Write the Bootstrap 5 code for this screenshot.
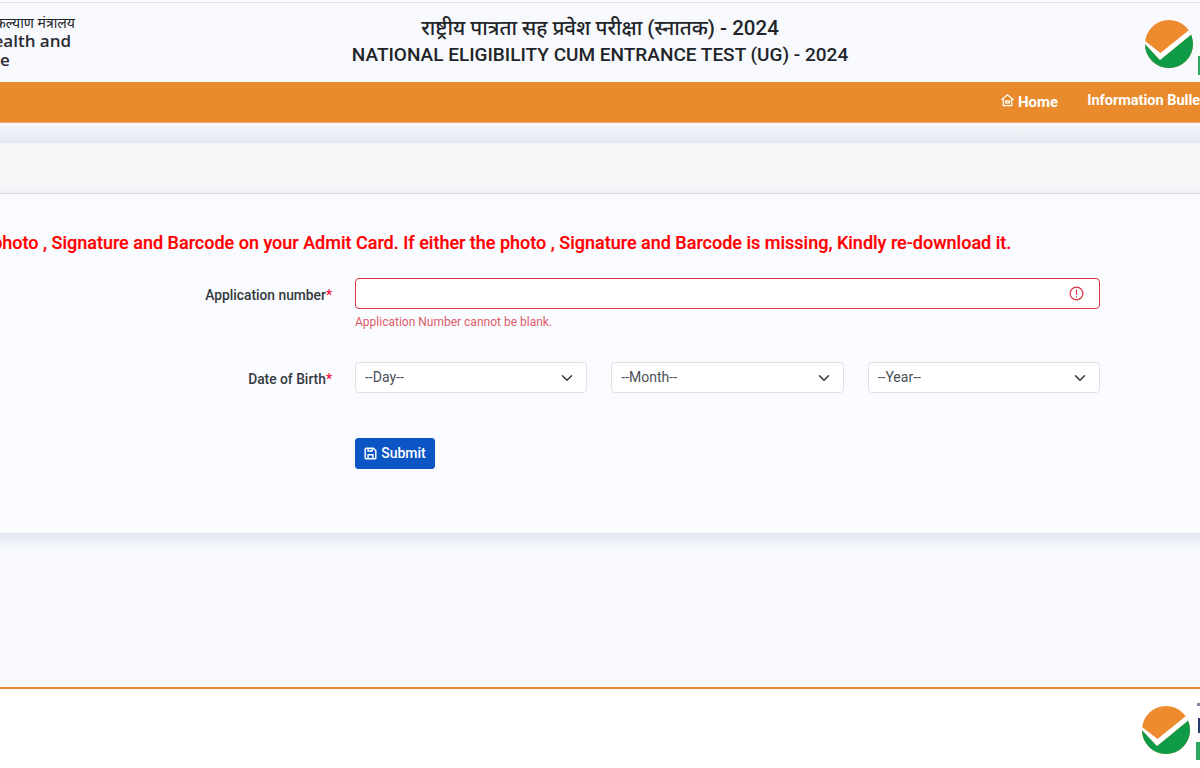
<!DOCTYPE html>
<html lang="en">
<head>
    <meta charset="UTF-8">
    <meta name="viewport" content="width=device-width, initial-scale=1.0">
    <link href="https://cdn.jsdelivr.net/npm/bootstrap@5.3.3/dist/css/bootstrap.min.css" rel="stylesheet">
    <title>NEET (UG) - 2024</title>
    <style>
        html, body {
            height: 768px;
            overflow: hidden;
        }
        body {
            background-color: #f8faff;
            font-family: Roboto, "Noto Sans", sans-serif;
            color: #212529;
        }
        .page-wrap {
            width: 1440px;
            margin-left: -120px;
        }
        .top-head {
            height: 80px;
            margin-top: 2px;
            background-color: #f8f9fc;
            border-top: 1px solid #dfe1e6;
            padding-left: 8px;
            padding-right: 113px;
        }
        .hindi-min {
            font-family: "Noto Sans", "Liberation Serif", serif;
            font-size: 14px;
            line-height: 16px;
            margin-left: 6px;
        }
        .eng-min {
            font-family: "Open Sans", sans-serif;
            font-size: 17px;
            font-weight: 600;
            line-height: 19px;
            color: #2b2b33;
        }
        .min-box {
            width: 200px;
            padding-top: 12px;
        }
        .title-box {
            left: 0;
            right: 0;
            top: 12px;
        }
        .title-hi {
            font-size: 20.5px;
            font-weight: 500;
            line-height: 26px;
        }
        .title-en {
            font-size: 19px;
            font-weight: 500;
            line-height: 28px;
        }
        .logo-box {
            width: 62px;
            height: 77px;
            padding-top: 17px;
            overflow: hidden;
        }
        .nta-logo {
            border-radius: 50%;
            display: block;
        }
        .green-tab {
            left: 53px;
            top: 53px;
            width: 20px;
            height: 19px;
            background-color: #2fa864;
        }
        .orange-bar {
            height: 41px;
            background-color: #e98a2c;
            border-bottom: 1px solid #f1a867;
            padding-left: 1120px;
            padding-bottom: 3px;
        }
        .orange-bar a {
            color: #fff;
            font-size: 14.500px;
            font-weight: 700;
            text-decoration: none;
            white-space: nowrap;
        }
        .orange-bar a.home-link {
            font-size: 15px;
            margin-right: 29px;
            padding-top: 4px;
        }
        .home-link svg {
            margin-right: 3px;
            margin-top: -5px;
        }
        .shade-band {
            height: 20px;
            background: linear-gradient(#f8f9fc, #e2e6f0);
        }
        .crumb-band {
            height: 51px;
            background-color: #f5f6f8;
            border-bottom: 1px solid #dcdee2;
        }
        .form-panel {
            height: 339px;
            background-color: #f9fbff;
            box-shadow: 0 6px 14px rgba(160, 170, 200, .3);
            padding-top: 36px;
        }
        .warn-line {
            color: #f00;
            font-size: 18px;
            font-weight: 500;
            -webkit-text-stroke: 0.2px #f00;
            line-height: 26px;
            margin-left: -29px;
            white-space: nowrap;
            margin-bottom: 22px;
        }
        .field-row {
            display: flex;
        }
        .dob-row {
            margin-top: 33px;
        }
        .submit-row {
            margin-top: 45px;
        }
        .field-label {
            width: 452px;
            margin-right: 23px;
            text-align: right;
            font-size: 13.800px;
            font-weight: 500;
            line-height: 20px;
            color: #343a40;
            padding-top: 7px;
        }
        .req {
            color: #f1113f;
        }
        .field-body {
            width: 745px;
        }
        .num-input {
            height: 31px;
            font-size: 14px;
            border-radius: 4px;
            border-color: #dc3545;
            background-color: #fff;
        }
        .err-text {
            color: #dc5b68;
            font-size: 12px;
            line-height: 14px;
            margin-top: 6px;
        }
        .err-icon {
            right: 16px;
            top: 8px;
        }
        .dob-select {
            height: 31px;
            font-size: 14px;
            line-height: 20px;
            color: #495057;
            padding: 3px 30px 5px 9px;
            border-radius: 4px;
            border-color: #dfe1e6;
            background-position: right 11px center;
        }
        .submit-btn {
            height: 31px;
            width: 80px;
            padding: 0;
            font-size: 14px;
            font-weight: 500;
            border-radius: 3px;
            background-color: #0b55c4;
            border-color: #0b55c4;
        }
        .site-foot {
            height: 81px;
            margin-top: 154px;
            background-color: #fff;
            border-top: 2px solid #e98a2c;
        }
        .foot-logo {
            margin-left: 1262px;
            padding-top: 17px;
        }
        .foot-mini {
            left: 55px;
            top: 14px;
            width: 10px;
            height: 3px;
            background-color: #7a86a6;
        }
        .foot-navy {
            left: 56px;
            top: 29px;
            width: 10px;
            height: 15px;
            background-color: #2a3b6e;
        }
        .foot-green {
            left: 54px;
            top: 53px;
            width: 10px;
            height: 18px;
            background-color: #2fa864;
        }
    </style>
</head>
<body>
    <div class="page-wrap">
        <div class="top-head d-flex justify-content-between position-relative">
            <div class="min-box">
                <div class="hindi-min text-nowrap">स्वास्थ्य और परिवार कल्याण मंत्रालय</div>
                <div class="eng-min">Ministry of Health and Family Welfare</div>
            </div>
            <div class="title-box position-absolute text-center">
                <div class="title-hi">राष्ट्रीय पात्रता सह प्रवेश परीक्षा (स्नातक) - 2024</div>
                <div class="title-en">NATIONAL ELIGIBILITY CUM ENTRANCE TEST (UG) - 2024</div>
            </div>
            <div class="logo-box position-relative">
                <svg class="nta-logo" width="48" height="48" viewBox="0 0 48 48">
                    <rect width="48" height="48" fill="#ee8b2e"/>
                    <path d="M0 24 L15 40 L48 13 V48 H0 Z" fill="#0f9a48"/>
                    <path d="M0 21 L15.500 33 L44 10 L48 13 L15 40 L0 24 Z" fill="#fff"/>
                </svg>
                <div class="green-tab position-absolute"></div>
            </div>
        </div>
        <div class="orange-bar d-flex align-items-center">
            <a href="#" class="home-link">
                <svg width="15" height="15" viewBox="0 0 16 16" fill="none" stroke="#fff" stroke-width="1.300">
                    <path d="M1.500 7.500 L8 2 L14.500 7.500"/>
                    <path d="M3.500 6 V13.500 H12.500 V6"/>
                    <path d="M6 8.500 H10 V10.500 H6 Z"/>
                </svg>Home</a>
            <a href="#">Information Bulletin</a>
        </div>
        <div class="shade-band"></div>
        <div class="crumb-band"></div>
        <div class="form-panel">
            <div class="warn-line">Please check the photo , Signature and Barcode on your Admit Card. If either the photo , Signature and Barcode is missing, Kindly re-download it.</div>
            <div class="field-row">
                <label class="field-label" for="appNo">Application number<span class="req">*</span></label>
                <div class="field-body position-relative">
                    <input type="text" class="form-control num-input" id="appNo">
                    <svg class="err-icon position-absolute" width="15" height="15" viewBox="0 0 16 16" fill="none" stroke="#dc3545" stroke-width="1.300">
                        <circle cx="8" cy="8" r="6.800"/>
                        <path d="M8 4 V9.200 M8 10.800 V12.200"/>
                    </svg>
                    <div class="err-text">Application Number cannot be blank.</div>
                </div>
            </div>
            <div class="field-row dob-row">
                <label class="field-label">Date of Birth<span class="req">*</span></label>
                <div class="field-body d-flex gap-4">
                    <select class="form-select dob-select"><option>--Day--</option></select>
                    <select class="form-select dob-select"><option>--Month--</option></select>
                    <select class="form-select dob-select"><option>--Year--</option></select>
                </div>
            </div>
            <div class="field-row submit-row">
                <div class="field-label"></div>
                <div class="field-body">
                    <button type="button" class="btn btn-primary submit-btn d-flex align-items-center justify-content-center gap-1">
                        <svg width="13" height="13" viewBox="0 0 16 16" fill="none" stroke="#fff" stroke-width="1.800">
                            <path d="M1.500 2.500 Q1.500 1.500 2.500 1.500 H11.500 L14.500 4.500 V13.500 Q14.500 14.500 13.500 14.500 H2.500 Q1.500 14.500 1.500 13.500 Z"/>
                            <path d="M5 14 V9.500 H11 V14 M5 2 V5 H10 V2"/>
                        </svg>Submit</button>
                </div>
            </div>
        </div>
        <div class="site-foot">
            <div class="foot-logo position-relative">
                <svg class="nta-logo" width="48" height="48" viewBox="0 0 48 48">
                    <rect width="48" height="48" fill="#ee8b2e"/>
                    <path d="M0 24 L15 40 L48 13 V48 H0 Z" fill="#0f9a48"/>
                    <path d="M0 21 L15.500 33 L44 10 L48 13 L15 40 L0 24 Z" fill="#fff"/>
                </svg>
                <div class="foot-mini position-absolute"></div>
                <div class="foot-navy position-absolute"></div>
                <div class="foot-green position-absolute"></div>
            </div>
        </div>
    </div>
    <script src="https://cdn.jsdelivr.net/npm/bootstrap@5.3.3/dist/js/bootstrap.bundle.min.js"></script>
</body>
</html>
